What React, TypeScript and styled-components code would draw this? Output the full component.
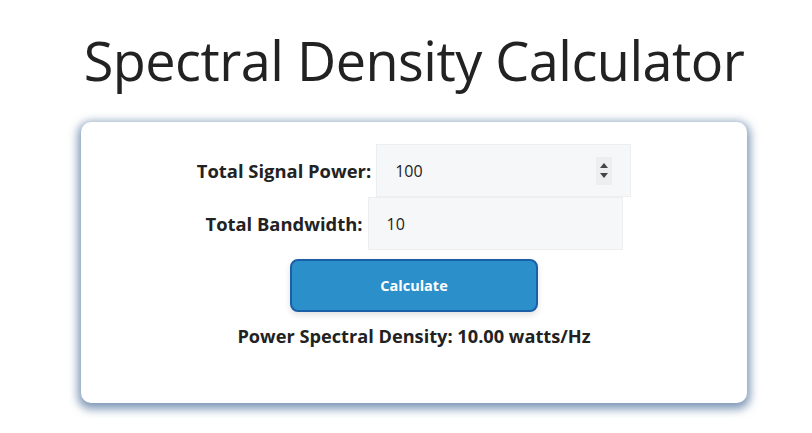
import styled, { createGlobalStyle } from "styled-components";

const GlobalStyle = createGlobalStyle`
  body {
    margin: 0;
    background: #ffffff;
    font-family: "Open Sans", "Noto Sans", sans-serif;
    color: #212529;
  }
`;

const App = () => {
    return (
        <>
            <GlobalStyle/>
            <Page>
                <Title>Spectral Density Calculator</Title>
                <Card>
                    <Row>
                        <Label>Total Signal Power:</Label>
                        <NumberField>
                            <Value>100</Value>
                            <Spinner>
                                <Arrow up/>
                                <Arrow/>
                            </Spinner>
                        </NumberField>
                    </Row>
                    <Row>
                        <Label>Total Bandwidth:</Label>
                        <NumberField>
                            <Value>10</Value>
                        </NumberField>
                    </Row>
                    <Button>Calculate</Button>
                    <Result>Power Spectral Density: 10.00 watts/Hz</Result>
                </Card>
            </Page>
        </>
    );
}

const Page = styled.main`
  width: 812px;
  min-height: 433px;
  box-sizing: border-box;
  padding: 20px 65px 0 81px;
  display: flex;
  flex-direction: column;
  align-items: center;
`

const Title = styled.h1`
  margin: 0 0 22px;
  font-size: 54px;
  font-weight: 400;
  line-height: 80px;
  color: #222;
  letter-spacing: -0.5px;
`

const Card = styled.section`
  width: 666px;
  height: 281px;
  box-sizing: border-box;
  background: #fff;
  border-radius: 10px;
  box-shadow: 0 3px 10px 3px rgba(70, 105, 150, 0.7);
  padding-top: 22px;
  display: flex;
  flex-direction: column;
  align-items: center;
`

const Row = styled.div`
  display: flex;
  align-items: center;
  gap: 5px;
`

const Label = styled.label`
  font-size: 18.4px;
  font-weight: 700;
  color: #222;
`

const NumberField = styled.div`
  width: 255px;
  height: 53px;
  box-sizing: border-box;
  background: #f6f7f9;
  border: 1px solid #eceef0;
  padding: 0 18px 0 18px;
  display: flex;
  align-items: center;
  justify-content: space-between;
`

const Value = styled.span`
  font-size: 16px;
  color: #222;
`

const Spinner = styled.span`
  width: 16px;
  height: 28px;
  background: #eceef0;
  display: flex;
  flex-direction: column;
  align-items: center;
  justify-content: center;
  gap: 5px;
`

const Arrow = styled.span<{ up?: boolean }>`
  width: 0;
  height: 0;
  border-left: 4px solid transparent;
  border-right: 4px solid transparent;
  ${p => p.up ? "border-bottom: 5px solid #444;" : "border-top: 5px solid #444;"}
`

const Button = styled.button`
  margin-top: 9px;
  width: 248px;
  height: 53px;
  background: #2b8fca;
  border: 2px solid #1b5fa9;
  border-radius: 8px;
  color: #fff;
  font-family: inherit;
  font-size: 14.5px;
  font-weight: 700;
  box-shadow: 0 3px 6px rgba(0, 0, 0, 0.12);
`

const Result = styled.p`
  margin: 12px 0 0;
  font-size: 18.2px;
  font-weight: 700;
  color: #222;
`

export default App
